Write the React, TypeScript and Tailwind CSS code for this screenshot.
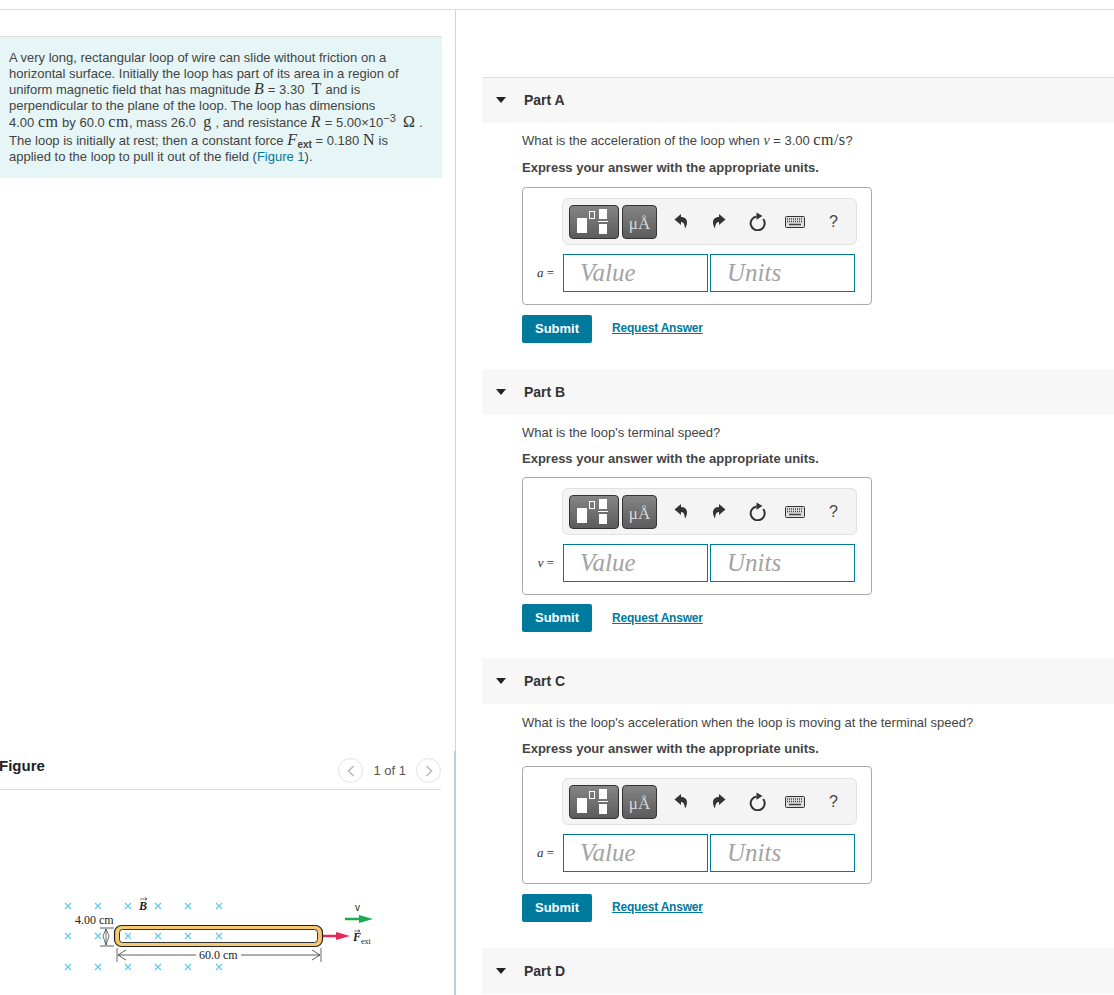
import React from 'react'

const serif = "font-['Liberation_Serif',serif]";

function M({ children, i = false }: { children: React.ReactNode; i?: boolean }) {
  return <span className={`${serif} text-[16px] tracking-[0.5px] leading-[0] text-[#333] ${i ? 'italic' : ''}`}>{children}</span>;
}

function Undo({ flip = false }: { flip?: boolean }) {
  return (
    <svg width="14" height="16" viewBox="0 0 14 16" className={flip ? '-scale-x-100' : ''}>
      <path d="M7 1 L0.5 6.5 L7 12 V9 C9.5 9 10.5 11 11 15.5 C14.5 10 13.5 4 7 4 Z" fill="#333" />
    </svg>
  );
}

function Reset() {
  return (
    <svg width="18" height="19" viewBox="0 0 18 19">
      <path d="M14.2 7 A7 7 0 1 1 7.5 4.4" fill="none" stroke="#333" strokeWidth="2" />
      <path d="M7.5 0.5 L13.5 4 L7.5 7.8 Z" fill="#333" />
    </svg>
  );
}

function Keyboard() {
  return (
    <svg width="20" height="12" viewBox="0 0 20 12">
      <rect x="0.5" y="0.5" width="19" height="11" rx="1" fill="#ddd" stroke="#333" />
      <path d="M2 3h16M2 5.5h16" stroke="#444" strokeWidth="1.3" strokeDasharray="1 1" />
      <path d="M4 8.5h12" stroke="#444" strokeWidth="1.5" />
    </svg>
  );
}

function Chevron({ right = false }: { right?: boolean }) {
  return (
    <span className="w-[25px] h-[25px] rounded-full border border-[#e4e4e4] flex items-center justify-center">
      <svg width="8" height="12" viewBox="0 0 8 12">
        <path d={right ? 'M1.5 1 L6.5 6 L1.5 11' : 'M6.5 1 L1.5 6 L6.5 11'} fill="none" stroke="#bbb" strokeWidth="1.6" />
      </svg>
    </span>
  );
}

function TemplateBtn() {
  return (
    <div className="w-[50px] h-[34px] rounded-[4px] border border-[#333] bg-gradient-to-b from-[#858585] to-[#5c5c5c] relative">
      <span className="absolute left-[7px] top-[12px] w-[10px] h-[15px] bg-white" />
      <span className="absolute left-[19px] top-[5px] w-[6px] h-[8px] border border-white" />
      <span className="absolute left-[29px] top-[3px] w-[8px] h-[10px] bg-white" />
      <span className="absolute left-[28px] top-[15px] w-[10px] h-[1px] bg-white" />
      <span className="absolute left-[29px] top-[18px] w-[8px] h-[10px] bg-white" />
    </div>
  );
}

function Part({
  name,
  variable,
  question,
  headClass,
  qClass,
  expressClass,
  boxClass,
  toolbarClass,
  submitClass,
  linkClass,
  line = false,
}: {
  name: string;
  variable: string;
  question: React.ReactNode;
  headClass: string;
  qClass: string;
  expressClass: string;
  boxClass: string;
  toolbarClass: string;
  submitClass: string;
  linkClass: string;
  line?: boolean;
}) {
  return (
    <section className={headClass}>
      <PartHead name={name} line={line} />
      <div className="pl-10">
        <p className={`h-4 text-[13px] leading-4 text-[#444] ${qClass}`}>{question}</p>
        <p className={`text-[13px] leading-4 font-bold text-[#444] ${expressClass}`}>Express your answer with the appropriate units.</p>
        <div className={`w-[350px] h-[118px] rounded-[4px] border border-[#aaa] ${boxClass}`}>
          <div className={`ml-[39px] w-[295px] h-[47px] rounded-[6px] border border-[#e2e2e2] bg-[#f4f4f4] flex items-center pl-[6px] ${toolbarClass}`}>
            <TemplateBtn />
            <div className={`ml-[3px] w-[35px] h-[34px] pt-[5px] rounded-[4px] border border-[#333] bg-gradient-to-b from-[#858585] to-[#5c5c5c] flex items-center justify-center text-[#d8d8d8] text-[17px] ${serif}`}>
              μÅ
            </div>
            <div className="ml-[17px] w-[14px] flex justify-center -mt-[1px]"><Undo /></div>
            <div className="ml-[24px] w-[14px] flex justify-center -mt-[1px]"><Undo flip /></div>
            <div className="ml-[23px] w-[18px] flex justify-center"><Reset /></div>
            <div className="ml-[18px] w-[20px] flex justify-center"><Keyboard /></div>
            <div className="ml-[24px] text-base text-[#444]">?</div>
          </div>
          <div className="mt-[9px] flex items-center">
            <div className={`w-[40px] pr-[9px] text-right text-[13px] whitespace-nowrap text-[#333] ${serif}`}>
              <span className="italic">{variable}</span> =
            </div>
            <div className={`w-[145px] h-[38px] border border-[#007a9c] pl-[16px] flex items-center text-[25px] italic text-[#a3a3a3] ${serif}`}>Value</div>
            <div className={`ml-[2px] w-[145px] h-[38px] border border-[#007a9c] pl-[16px] flex items-center text-[25px] italic text-[#a3a3a3] ${serif}`}>Units</div>
          </div>
        </div>
        <div className={`flex items-center ${submitClass}`}>
          <button className="w-[70px] h-[28px] rounded-[2px] bg-[#007a9c] text-white text-[13px] font-bold">Submit</button>
          <a className={`ml-5 text-xs font-bold underline tracking-[-0.2px] text-[#007a9c] ${linkClass}`}>Request Answer</a>
        </div>
      </div>
    </section>
  );
}

function PartHead({ name, line = false }: { name: string; line?: boolean }) {
  return (
    <div className={`h-[46px] bg-[#f7f7f7] flex items-center ${line ? 'border-t border-[#ddd] pb-[1px]' : ''}`}>
      <span className="ml-[14px] w-0 h-0 border-x-[5px] border-x-transparent border-t-[6px] border-t-[#222]" />
      <span className="ml-[18px] text-sm font-bold text-[#333]">{name}</span>
    </div>
  );
}

function Figure() {
  const xs = [68, 98, 128, 158, 188, 219];
  const ys = [906, 936, 967];
  return (
    <svg width="350" height="110" viewBox="40 885 350 110" className="ml-[40px] mt-[95px] block">
      <rect x="114.5" y="925.5" width="208" height="21" rx="7" fill="#f5c873" stroke="#222" strokeWidth="1.2" />
      <rect x="119.5" y="929.5" width="198" height="13" rx="3" fill="#fff" stroke="#333" strokeWidth="1" />
      {ys.map((y) =>
        xs.map((x) => (
          <path key={`${x}-${y}`} d={`M${x - 3} ${y - 3}l6 6m0 -6l-6 6`} stroke="#5cc8f0" strokeWidth="1.1" />
        )),
      )}
      <text x="75" y="924" fontFamily="Liberation Serif" fontSize="12" fill="#222">4.00 cm</text>
      <text x="139" y="910" fontFamily="Liberation Serif" fontSize="12" fontWeight="bold" fontStyle="italic" fill="#222">B</text>
      <path d="M140 899h7m-2 -1.5l2 1.5l-2 1.5" stroke="#222" strokeWidth="0.6" fill="none" />
      <path d="M100 928h14M100 946h14" stroke="#333" strokeWidth="0.8" />
      <path d="M106 929v16M106 929l-3 7l3 9M106 929l3 7l-3 9" stroke="#333" strokeWidth="0.7" fill="none" />
      <path d="M117 948v14M321 948v14" stroke="#444" strokeWidth="0.8" />
      <path d="M118 955h78M241 955h79" stroke="#333" strokeWidth="0.8" />
      <path d="M126 950l-8 5l8 5M312 950l8 5l-8 5" stroke="#333" strokeWidth="0.8" fill="none" />
      <text x="199" y="959" fontFamily="Liberation Serif" fontSize="12" fill="#222">60.0 cm</text>
      <path d="M323 936h14" stroke="#e8285a" strokeWidth="2.5" />
      <path d="M336 932l14 4l-14 4z" fill="#e8285a" />
      <path d="M345 919h16" stroke="#1eaa50" strokeWidth="2.5" />
      <path d="M359 915l14 4l-14 4z" fill="#1eaa50" />
      <text x="355" y="911" fontFamily="Liberation Sans" fontSize="10" fill="#222">v</text>
      <text x="353" y="941" fontFamily="Liberation Serif" fontSize="12" fontWeight="bold" fontStyle="italic" fill="#222">F</text>
      <path d="M354 931h6m-2 -1.5l2 1.5l-2 1.5" stroke="#222" strokeWidth="0.6" fill="none" />
      <text x="361" y="944" fontFamily="Liberation Serif" fontSize="8" fill="#222">ext</text>
    </svg>
  );
}

export default function App() {
  return (
    <div className="h-[995px] w-[1114px] overflow-hidden bg-white font-['Liberation_Sans',Arial,sans-serif]">
      <div className="mt-[9px] flex h-[986px] border-t border-[#ddd]">
        <div className="relative w-[456px] shrink-0 border-r border-[#c9d8e8] pt-[26px]">
          <span className="absolute left-[454px] top-[741px] bottom-0 w-[2px] bg-[#b9cde2]" />
          <div className="w-[442px] h-[142px] bg-[#e6f5f6] border-t border-[#ddd] pl-[9px] pt-[13px] text-[13px] leading-4 text-[#444] whitespace-nowrap">
            <div className="h-4">A very long, rectangular loop of wire can slide without friction on a</div>
            <div className="h-4">horizontal surface. Initially the loop has part of its area in a region of</div>
            <div className="h-4">uniform magnetic field that has magnitude <M i>B</M> = 3.30 &nbsp;<M>T</M> and is</div>
            <div className="h-4">perpendicular to the plane of the loop. The loop has dimensions</div>
            <div className="h-4 mt-[1px]">4.00 <M>cm</M> by 60.0 <M>cm</M>, mass 26.0 &nbsp;<M>g</M> , and resistance <M i>R</M> = 5.00×10<sup className="text-[11px] leading-[0]">−3</sup> &nbsp;<M>Ω</M> .</div>
            <div className="h-4 mt-[2px]">The loop is initially at rest; then a constant force <M i>F</M><sub className="text-[10px] leading-[0] font-bold">ext</sub> = 0.180 <M>N</M> is</div>
            <div className="h-4">applied to the loop to pull it out of the field (<a className="text-[#007a9c]">Figure 1</a>).</div>
          </div>
          <div className="mt-[578px] w-[441px] h-[34px] border-b border-[#ddd] flex items-center">
            <h2 className="-ml-[1px] text-[15px] font-bold text-[#222] -mt-[12px]">Figure</h2>
            <div className="ml-auto -mt-[4px] flex items-center text-[13px] text-[#555]">
              <Chevron />
              <span className="mx-[10px]">1 of 1</span>
              <Chevron right />
            </div>
          </div>
          <Figure />
        </div>
        <div className="flex-1 pl-[26px] pt-[67px]">
          <Part
            name="Part A"
            variable="a"
            line
            question={<>What is the acceleration of the loop when <span className={`${serif} text-sm leading-[0] italic`}>v</span> = 3.00 <M>cm/s</M>?</>}
            headClass=""
            qClass="mt-[10px]"
            expressClass="mt-[11px]"
            boxClass="mt-[11px]"
            toolbarClass="mt-[10px]"
            submitClass="mt-[10px]"
            linkClass="-mt-[2px]"
          />
          <Part
            name="Part B"
            variable="v"
            question="What is the loop's terminal speed?"
            headClass="mt-[26px]"
            qClass="mt-[10px]"
            expressClass="mt-[10px]"
            boxClass="mt-[10px]"
            toolbarClass="mt-[10px]"
            submitClass="mt-[9px]"
            linkClass=""
          />
          <Part
            name="Part C"
            variable="a"
            question="What is the loop's acceleration when the loop is moving at the terminal speed?"
            headClass="mt-[26px]"
            qClass="mt-[11px]"
            expressClass="mt-[10px]"
            boxClass="mt-[9px]"
            toolbarClass="mt-[11px]"
            submitClass="mt-[10px]"
            linkClass="-mt-[2px]"
          />
          <div className="mt-[26px]">
            <PartHead name="Part D" />
          </div>
        </div>
      </div>
    </div>
  );
}
